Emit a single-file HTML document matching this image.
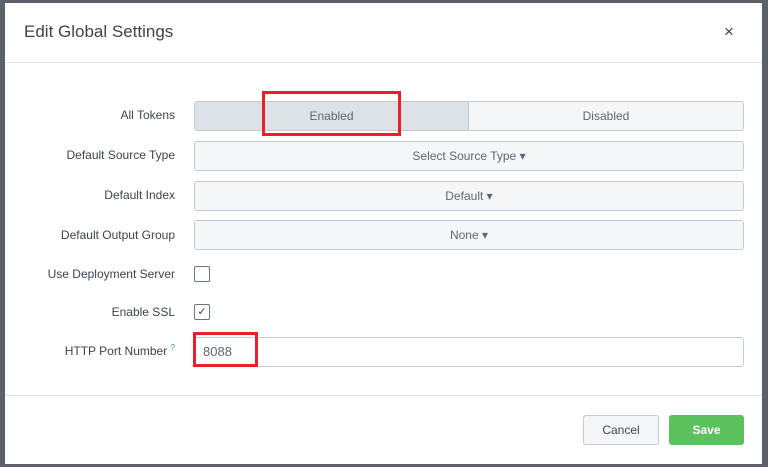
<!DOCTYPE html>
<html><head><style>
body{margin:0;width:768px;height:467px;background:#5c6068;position:relative;overflow:hidden;font-family:"Liberation Sans",sans-serif;}
.m{position:absolute;left:5px;top:3px;width:757px;height:461px;background:#fff;}
.a{position:absolute;}
.lbl{position:absolute;right:593px;font-size:12px;color:#3c444d;text-align:right;white-space:nowrap;}
.box{position:absolute;left:194px;width:548px;height:28px;background:#f5f6f8;border:1px solid #c3cbd4;border-radius:3px;font-size:12px;color:#5c6773;text-align:center;line-height:28px;}
.cb{position:absolute;left:194px;width:14px;height:14px;border:1px solid #6b7580;border-radius:2px;background:#fff;}
.red{position:absolute;border:3px solid #e8202a;}
</style></head><body>
<div class="m"></div>
<div class="a" style="left:24px;top:22px;font-size:17px;color:#3c444d;">Edit Global Settings</div>
<div class="a" style="left:724px;top:22px;font-size:17px;color:#3c444d;">×</div>
<div class="a" style="left:5px;top:62px;width:757px;height:1px;background:#e1e6eb"></div>
<div class="lbl" style="top:108px">All Tokens</div>
<div class="box" style="top:101px;padding:0;display:flex;overflow:hidden">
<div style="width:273px;background:#dde2e7;border-right:1px solid #c3cbd4">Enabled</div><div style="flex:1">Disabled</div></div>
<div class="lbl" style="top:148px">Default Source Type</div>
<div class="box" style="top:141px">Select Source Type ▾</div>
<div class="lbl" style="top:188px">Default Index</div>
<div class="box" style="top:181px">Default ▾</div>
<div class="lbl" style="top:228px">Default Output Group</div>
<div class="box" style="top:220px">None ▾</div>
<div class="lbl" style="top:267px">Use Deployment Server</div>
<div class="cb" style="top:266px"></div>
<div class="lbl" style="top:305px">Enable SSL</div>
<div class="cb" style="top:304px;font-size:11px;line-height:14px;text-align:center;color:#3c444d">✓</div>
<div class="lbl" style="top:343px">HTTP Port Number <sup style="color:#1e93c6;font-size:8px">?</sup></div>
<div class="box" style="top:337px;background:#fff;text-align:left;padding-left:8px;width:540px;font-size:13px">8088</div>
<div class="red" style="left:262px;top:91px;width:133px;height:39px"></div>
<div class="red" style="left:193px;top:332px;width:59px;height:29px"></div>
<div class="a" style="left:5px;top:395px;width:757px;height:1px;background:#e1e6eb"></div>
<div class="a" style="left:583px;top:415px;width:74px;height:28px;background:#f5f6f8;border:1px solid #c3cbd4;border-radius:3px;font-size:12px;color:#3c444d;text-align:center;line-height:28px">Cancel</div>
<div class="a" style="left:669px;top:415px;width:75px;height:30px;background:#5cc05c;border-radius:3px;font-size:12px;font-weight:bold;color:#fff;text-align:center;line-height:30px">Save</div>
</body></html>
